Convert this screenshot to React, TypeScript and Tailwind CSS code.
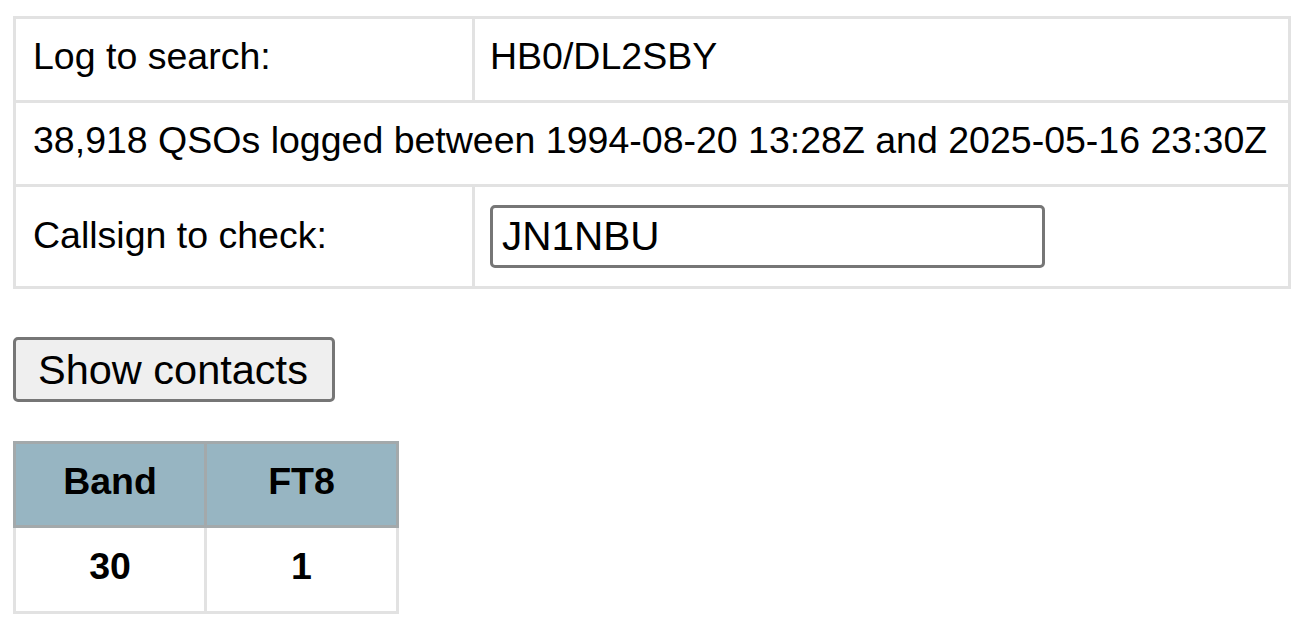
import React from 'react';

const font = "font-['Liberation_Sans',Arial,sans-serif]";

export default function App() {
  return (
    <div className={`${font} text-[37.5px] leading-[43px] text-black bg-white min-h-[625px] pt-[16px] pl-[13px]`}>
      <table className="border-collapse table-fixed w-[1275px]">
        <colgroup>
          <col className="w-[459px]" />
          <col className="w-[816px]" />
        </colgroup>
        <tbody>
          <tr>
            <td className="border-[3px] border-[#e2e2e2] h-[84px] px-[17px] pb-[6px] align-middle">Log to search:</td>
            <td className="border-[3px] border-[#e2e2e2] h-[84px] px-[15px] pb-[6px] align-middle">HB0/DL2SBY</td>
          </tr>
          <tr>
            <td colSpan={2} className="border-[3px] border-[#e2e2e2] h-[84px] px-[17px] pb-[6px] align-middle whitespace-nowrap">
              38,918 QSOs logged between 1994-08-20 13:28Z and 2025-05-16 23:30Z
            </td>
          </tr>
          <tr>
            <td className="border-[3px] border-[#e2e2e2] h-[102px] px-[17px] pb-[2px] align-middle">Callsign to check:</td>
            <td className="border-[3px] border-[#e2e2e2] h-[102px] px-[15px] align-middle">
              <input
                type="text"
                defaultValue="JN1NBU"
                className="block w-[555px] h-[63px] border-[3px] border-[#767676] rounded-[5px] pl-[9px] text-[40.5px] leading-[47px] bg-white outline-none"
              />
            </td>
          </tr>
        </tbody>
      </table>

      <button className="mt-[48px] block box-border w-[322px] h-[65px] bg-[#efefef] border-[3px] border-[#767676] rounded-[5px] pl-[22px] text-left text-[41.5px] leading-[48px]">
        Show contacts
      </button>

      <table className="mt-[39px] border-collapse table-fixed w-[383px] text-center font-bold">
        <colgroup>
          <col className="w-[191px]" />
          <col className="w-[192px]" />
        </colgroup>
        <thead>
          <tr className="bg-[#97b5c2]">
            <th className="border-[3px] border-[#a3a9ab] h-[84px] pb-[6px] align-middle">Band</th>
            <th className="border-[3px] border-[#a3a9ab] h-[84px] pb-[6px] align-middle">FT8</th>
          </tr>
        </thead>
        <tbody>
          <tr>
            <td className="border-[3px] border-[#e2e2e2] h-[86px] pb-[6px] align-middle">30</td>
            <td className="border-[3px] border-[#e2e2e2] h-[86px] pb-[6px] align-middle">1</td>
          </tr>
        </tbody>
      </table>
    </div>
  );
}
